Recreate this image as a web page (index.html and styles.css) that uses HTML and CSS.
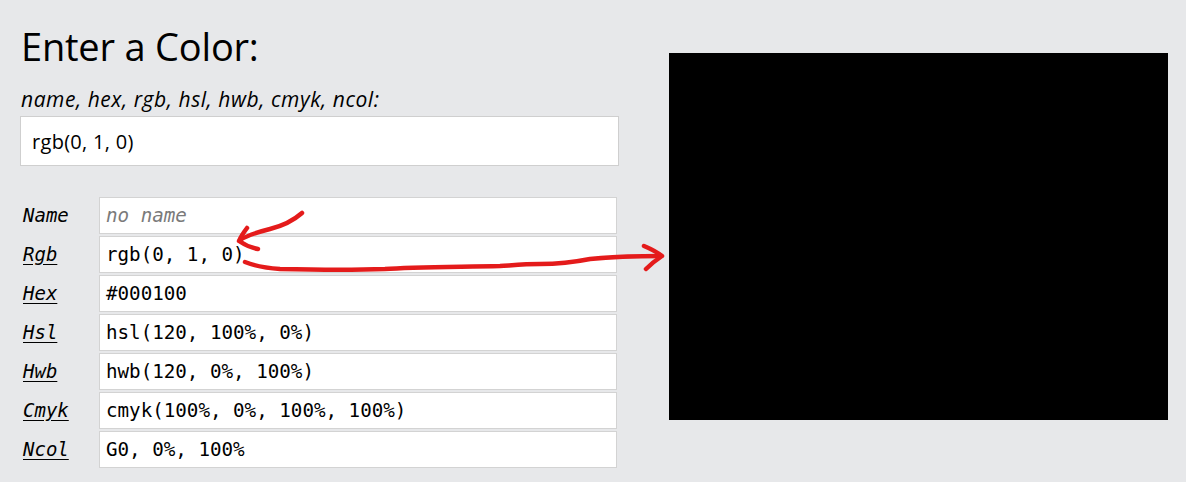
FILE: index.html
```html
<!DOCTYPE html>
<html>
<head>
<meta charset="utf-8">
<link rel="stylesheet" href="styles.css">
</head>
<body>
<div class="page">
  <div class="left">
    <h1 class="title">Enter a Color:</h1>
    <div class="hint">name, hex, rgb, hsl, hwb, cmyk, ncol:</div>
    <div class="entry"><span class="entry-text">rgb(0, 1, 0)</span></div>
    <div class="table">
      <div class="label plain">Name</div><div class="val placeholder">no name</div>
      <div class="label">Rgb</div><div class="val">rgb(0, 1, 0)</div>
      <div class="label">Hex</div><div class="val">#000100</div>
      <div class="label">Hsl</div><div class="val">hsl(120, 100%, 0%)</div>
      <div class="label">Hwb</div><div class="val">hwb(120, 0%, 100%)</div>
      <div class="label">Cmyk</div><div class="val">cmyk(100%, 0%, 100%, 100%)</div>
      <div class="label">Ncol</div><div class="val">G0, 0%, 100%</div>
    </div>
  </div>
  <div class="swatch"></div>
</div>
<svg class="arrows" width="1186" height="482" viewBox="0 0 1186 482">
  <g fill="none" stroke="#e41b1b" stroke-width="4.5" stroke-linecap="round" stroke-linejoin="round">
    <path d="M302 213 C294 220 282 226 270 229 C258 232 248 235 240 240"/>
    <path d="M247 228 C244 232 241 236 239 241 C245 245 252 248 258 249"/>
    <path d="M245 262 C255 266 265 268 280 269 C320 270 360 270 385 269 C410 267 450 267 500 266 C515 265 525 264 540 264 C560 264 575 262 590 259 C610 257 635 256 661 256"/>
    <path d="M644 246 C651 249 657 252 662 256 C656 260 650 265 646 269"/>
  </g>
</svg>
</body>
</html>
```
FILE: styles.css
```css
html, body {
  margin: 0;
  padding: 0;
  background: #e7e8ea;
}
body {
  width: 1186px;
  height: 482px;
  overflow: hidden;
  position: relative;
  font-family: "Open Sans", "Noto Sans", sans-serif;
  color: #000;
}
.page {
  display: flex;
  padding-left: 20px;
}
.left {
  width: 599px;
  display: flex;
  flex-direction: column;
}
.title {
  margin: 22px 0 0 1px;
  font-size: 38px;
  font-weight: 400;
  line-height: 48px;
  letter-spacing: -0.2px;
}
.hint {
  margin: 17px 0 0 1px;
  font-size: 21px;
  font-style: italic;
  line-height: 24px;
  letter-spacing: 0.55px;
}
.entry {
  margin-top: 5px;
  height: 48px;
  border: 1px solid #cfcfcf;
  background: #fff;
  display: flex;
  align-items: center;
  font-size: 20px;
  letter-spacing: 0.3px;
}
.entry-text {
  margin-left: 11px;
}
.table {
  margin-top: 31px;
  width: 597px;
  display: grid;
  grid-template-columns: 79px 1fr;
  row-gap: 2px;
}
.label {
  font-family: "DejaVu Sans Mono", "Liberation Mono", monospace;
  font-style: italic;
  font-size: 19px;
  text-decoration: underline;
  text-underline-offset: 3px;
  padding-left: 3px;
  line-height: 37px;
  height: 37px;
}
.label.plain {
  text-decoration: none;
}
.val {
  height: 35px;
  border: 1px solid #d3d3d3;
  background: #fff;
  padding-left: 6px;
  font-family: "DejaVu Sans Mono", "Liberation Mono", monospace;
  font-size: 19.2px;
  line-height: 35px;
}
.placeholder {
  color: #7a7a7a;
  font-style: italic;
}
.swatch {
  margin: 53px 0 0 50px;
  width: 499px;
  height: 367px;
  background: #000;
}
.arrows {
  position: absolute;
  top: 0;
  left: 0;
  pointer-events: none;
}
```
